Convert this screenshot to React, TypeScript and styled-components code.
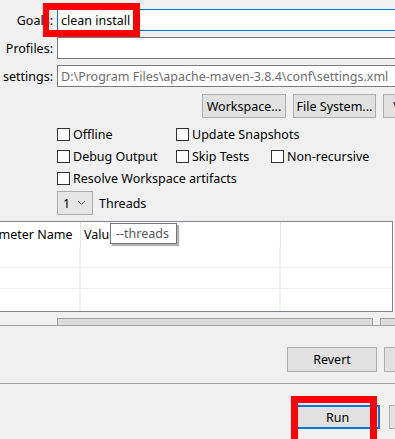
import React from 'react';
import styled, { createGlobalStyle } from 'styled-components';

const GlobalStyle = createGlobalStyle`
  html, body {
    margin: 0;
    padding: 0;
    background: #f0f0f0;
  }
  body {
    font-family: "Noto Sans", "Liberation Sans", sans-serif;
    font-size: 12.5px;
    color: #000;
  }
`;

const Page = styled.div`
  width: 395px;
  height: 439px;
  overflow: hidden;
  background: #f0f0f0;
  display: flex;
  flex-direction: column;
`;

const Form = styled.div`
  display: grid;
  grid-template-columns: 53px 360px;
  grid-auto-rows: 22px;
  column-gap: 4px;
  row-gap: 6px;
  padding-top: 9px;
`;

const Label = styled.div`
  display: flex;
  justify-content: flex-end;
  align-items: center;
  overflow: hidden;
  white-space: nowrap;
`;

const FieldWrap = styled.div`
  position: relative;
`;

const TextInput = styled.div<{ $focused?: boolean; $muted?: boolean }>`
  box-sizing: border-box;
  height: 100%;
  display: flex;
  align-items: center;
  padding: 0 3px;
  background: #fff;
  border: 1px solid ${p => (p.$focused ? '#0078d7' : '#7a7a7a')};
  color: ${p => (p.$muted ? '#6d6d6d' : '#000')};
  white-space: nowrap;
`;

const Highlight = styled.div<{ $top: number; $left: number; $w: number; $h: number; $edge?: number }>`
  position: absolute;
  top: ${p => p.$top}px;
  left: ${p => p.$left}px;
  width: ${p => p.$w}px;
  height: ${p => p.$h}px;
  box-sizing: border-box;
  border: 7px solid #ff0000;
  border-left-width: ${p => p.$edge ?? 7}px;
  pointer-events: none;
`;

const ButtonRow = styled.div<{ $pad: number; $gap: number; $top: number }>`
  display: flex;
  gap: ${p => p.$gap}px;
  padding-left: ${p => p.$pad}px;
  margin-top: ${p => p.$top}px;
  flex-shrink: 0;
`;

const Button = styled.div<{ $w: number; $h?: number; $default?: boolean }>`
  box-sizing: border-box;
  flex-shrink: 0;
  width: ${p => p.$w}px;
  height: ${p => p.$h ?? 24}px;
  display: flex;
  align-items: center;
  justify-content: center;
  background: #e1e1e1;
  border: ${p => (p.$default ? '2px solid #0078d7' : '1px solid #adadad')};
  white-space: nowrap;
  overflow: hidden;
`;

const Options = styled.div`
  display: grid;
  grid-template-columns: 119px 95px auto;
  grid-auto-rows: 22px;
  padding-left: 57px;
  margin-top: 5px;
`;

const Option = styled.label<{ $span?: number }>`
  display: flex;
  align-items: center;
  gap: 3px;
  white-space: nowrap;
  grid-column: span ${p => p.$span ?? 1};
`;

const Box = styled.span`
  box-sizing: border-box;
  width: 13px;
  height: 13px;
  border: 1px solid #333;
  background: #fff;
  flex-shrink: 0;
`;

const ThreadsRow = styled.div`
  display: flex;
  align-items: center;
  gap: 6px;
  padding-left: 57px;
  margin-top: 2px;
`;

const Combo = styled.div`
  box-sizing: border-box;
  width: 36px;
  height: 24px;
  display: flex;
  align-items: center;
  justify-content: space-between;
  padding: 0 6px 0 5px;
  background: #e5e5e5;
  border: 1px solid #adadad;
`;

const Table = styled.div`
  position: relative;
  box-sizing: border-box;
  margin-top: 6px;
  margin-left: -32px;
  width: 425px;
  height: 91px;
  flex-shrink: 0;
  border: 1px solid #828790;
  background: #fff;
  display: grid;
  grid-template-columns: 112px 200px 1fr;
  grid-template-rows: 25px 21px 21px 22px;
`;

const HeadCell = styled.div<{ $last?: boolean }>`
  display: flex;
  align-items: center;
  padding-left: 3px;
  white-space: nowrap;
  overflow: hidden;
  border-right: ${p => (p.$last ? 'none' : '1px solid #e5e5e5')};
`;

const Cell = styled.div<{ $last?: boolean; $line?: boolean }>`
  border-right: ${p => (p.$last ? 'none' : '2px solid #edf2f9')};
  border-bottom: ${p => (p.$line ? '1px solid #f0f0f0' : 'none')};
`;

const Tooltip = styled.div`
  position: absolute;
  top: 1px;
  left: 141px;
  box-sizing: border-box;
  width: 67px;
  height: 21px;
  display: flex;
  align-items: center;
  padding-left: 5px;
  background: #fff;
  color: #575757;
  border: 1px solid #767676;
  box-shadow: 2px 2px 1px rgba(0, 0, 0, 0.3);
  white-space: nowrap;
`;

const ClipStrip = styled.div`
  display: flex;
  gap: 7px;
  height: 13px;
  flex-shrink: 0;
  padding-left: 57px;
  overflow: hidden;
  border-bottom: 1px solid #a0a0a0;
`;

const StubButton = styled.div<{ $w: number }>`
  flex-shrink: 0;
  margin-top: 6px;
  width: ${p => p.$w}px;
  height: 20px;
  box-sizing: border-box;
  background: #dcdcdc;
  border: 1px solid #a0a0a0;
`;

const Separator = styled.div`
  margin-top: 11px;
  height: 1px;
  background: #a0a0a0;
  flex-shrink: 0;
`;

const Anchor = styled.div`
  position: relative;
  flex-shrink: 0;
`;

const Chevron = () => (
  <svg width="9" height="6" viewBox="0 0 9 6">
    <polyline points="1,1 4.5,4.5 8,1" fill="none" stroke="#555" strokeWidth="1" />
  </svg>
);

export default function App() {
  return (
    <>
      <GlobalStyle />
      <Page>
        <Form>
          <Label>Goals:</Label>
          <FieldWrap>
            <TextInput $focused>clean install</TextInput>
            <Highlight $top={-6} $left={-14} $w={97} $h={34} $edge={6} />
          </FieldWrap>
          <Label>Profiles:</Label>
          <TextInput />
          <Label>settings:</Label>
          <TextInput $muted>D:\Program Files\apache-maven-3.8.4\conf\settings.xml</TextInput>
        </Form>

        <ButtonRow $pad={202} $gap={7} $top={7}>
          <Button $w={84}>Workspace...</Button>
          <Button $w={83}>File System...</Button>
          <Button $w={84}>Variables...</Button>
        </ButtonRow>

        <Options>
          <Option><Box />Offline</Option>
          <Option $span={2}><Box />Update Snapshots</Option>
          <Option><Box />Debug Output</Option>
          <Option><Box />Skip Tests</Option>
          <Option><Box />Non-recursive</Option>
          <Option $span={3}><Box />Resolve Workspace artifacts</Option>
        </Options>

        <ThreadsRow>
          <Combo>
            <span>1</span>
            <Chevron />
          </Combo>
          <span>Threads</span>
        </ThreadsRow>

        <Table>
          <HeadCell>Parameter Name</HeadCell>
          <HeadCell>Value</HeadCell>
          <HeadCell $last />
          <Cell $line />
          <Cell $line />
          <Cell $line $last />
          <Cell $line />
          <Cell $line />
          <Cell $line $last />
          <Cell />
          <Cell />
          <Cell $last />
          <Tooltip>--threads</Tooltip>
        </Table>

        <ClipStrip>
          <StubButton $w={316} />
          <StubButton $w={60} />
        </ClipStrip>

        <ButtonRow $pad={287} $gap={7} $top={21}>
          <Button $w={90} $h={25}>Revert</Button>
          <Button $w={90} $h={25}>Apply</Button>
        </ButtonRow>

        <Separator />

        <ButtonRow $pad={295} $gap={9} $top={21}>
          <Anchor>
            <Button $w={85} $default>Run</Button>
            <Highlight $top={-9} $left={-4} $w={86} $h={52} />
          </Anchor>
          <Button $w={85}>Close</Button>
        </ButtonRow>
      </Page>
    </>
  );
}
